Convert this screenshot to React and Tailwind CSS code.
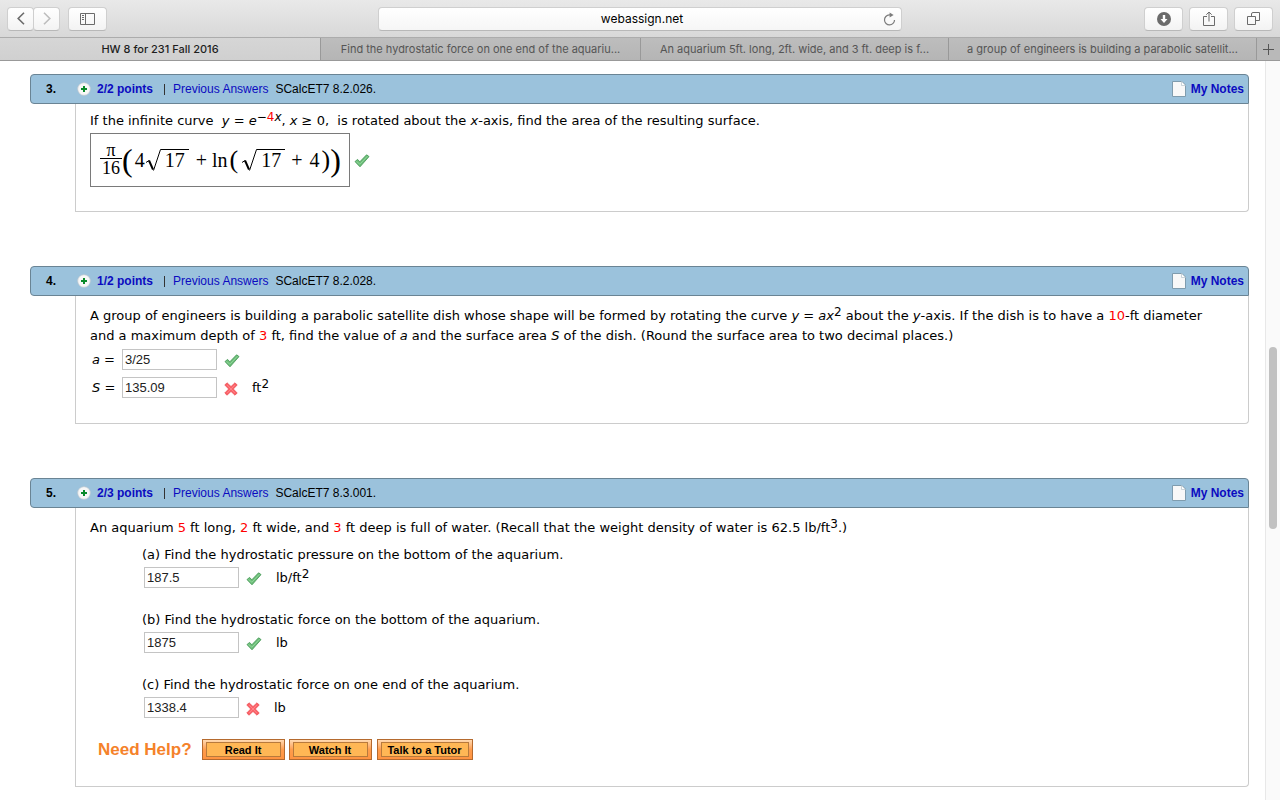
import { useState } from "react";

const tabs = [
  "HW 8 for 231 Fall 2016",
  "Find the hydrostatic force on one end of the aquariu...",
  "An aquarium 5ft. long, 2ft. wide, and 3 ft. deep is f...",
  "a group of engineers is building a parabolic satellit...",
];

const parts = [
  { id: "a", text: "(a) Find the hydrostatic pressure on the bottom of the aquarium.", value: "187.5", correct: true, unit: "lb/ft", power: "2" },
  { id: "b", text: "(b) Find the hydrostatic force on the bottom of the aquarium.", value: "1875", correct: true, unit: "lb" },
  { id: "c", text: "(c) Find the hydrostatic force on one end of the aquarium.", value: "1338.4", correct: false, unit: "lb" },
];

function ToolButton({ label, className, children }) {
  return (
    <button
      aria-label={label}
      className={`flex h-[24px] items-center justify-center rounded border border-[#cfcfcf] border-b-[#b8b8b8] bg-linear-to-b from-white to-[#f3f3f3] text-[#6b6b6b] ${className}`}
    >
      {children}
    </button>
  );
}

function Toolbar() {
  const [url, setUrl] = useState("webassign.net");

  return (
    <div className="flex h-[38px] items-center border-b border-[#acacac] bg-linear-to-b from-[#e9e9e9] to-[#d8d8d8]">
      <div className="flex flex-1 pl-[7px]">
        <ToolButton label="Back" className="w-[27px]">
          <svg width="8" height="13" viewBox="0 0 8 13" fill="none" stroke="currentColor" strokeWidth="1.6">
            <path d="M7 .8 1.2 6.5 7 12.2" />
          </svg>
        </ToolButton>
        <ToolButton label="Forward" className="-ml-px w-[27px]">
          <svg width="8" height="13" viewBox="0 0 8 13" fill="none" stroke="#bdbdbd" strokeWidth="1.6">
            <path d="M1 .8 6.8 6.5 1 12.2" />
          </svg>
        </ToolButton>
        <ToolButton label="Show sidebar" className="ml-2 w-[39px]">
          <svg width="15" height="12" viewBox="0 0 15 12" fill="none" stroke="currentColor">
            <path d="M.5.5h14v11H.5zM5.5.5v11M2 2.5h2M2 4.5h2M2 6.5h2" />
          </svg>
        </ToolButton>
      </div>

      <div className="flex h-[24px] w-[41%] items-center rounded border border-[#cfcfcf] border-b-[#b8b8b8] bg-linear-to-b from-white to-[#f6f6f6] pr-[5px] pl-[22px]">
        <input
          aria-label="Address"
          className="min-w-0 flex-1 bg-transparent text-center text-[12px] text-black outline-none"
          value={url}
          onChange={(e) => setUrl(e.target.value)}
        />
        <button aria-label="Reload">
          <svg width="13" height="14" viewBox="0 0 13 14" fill="none" stroke="#7c7c7c" strokeWidth="1.2">
            <path d="M7.5 2.9H6.3a5 5 0 1 0 5.2 5" />
            <path d="M6.6.4 10.6 3 6.6 5.6z" fill="#7c7c7c" stroke="none" />
          </svg>
        </button>
      </div>

      <div className="flex flex-1 justify-end gap-[6px] pr-[7px]">
        <ToolButton label="Downloads" className="w-[39px]">
          <svg width="14" height="14" viewBox="0 0 14 14">
            <circle cx="7" cy="7" r="7" fill="currentColor" />
            <path d="M5.8 3h2.4v4h2.3L7 11 3.5 7h2.3z" fill="white" />
          </svg>
        </ToolButton>
        <ToolButton label="Share" className="w-[39px]">
          <svg width="12" height="16" viewBox="0 0 12 16" fill="none" stroke="currentColor">
            <path d="M4 5.5H.5v9h11v-9H8M6 10.5V1M3.3 3.7 6 1l2.7 2.7" />
          </svg>
        </ToolButton>
        <ToolButton label="Show all tabs" className="w-[39px]">
          <svg width="13" height="13" viewBox="0 0 13 13" fill="none" stroke="currentColor">
            <path d="M.5 4.5h8v8h-8zM4.5 4.5v-2.5q0-1.5 1.5-1.5h6.5v8h-4" />
          </svg>
        </ToolButton>
      </div>
    </div>
  );
}

function TabBar() {
  const [active, setActive] = useState(0);

  return (
    <div className="grid h-[23px] grid-cols-[321fr_320fr_308fr_308fr_23px] border-b border-[#999] text-[11px] leading-[22px]">
      {tabs.map((tab, i) => (
        <button
          key={tab}
          onClick={() => setActive(i)}
          className={`min-w-0 truncate border-r border-[#999] px-3 ${
            i === active
              ? "bg-linear-to-b from-[#d6d6d6] to-[#d0d0d0] font-medium text-[#1e1e1e]"
              : "bg-linear-to-b from-[#bdbdbd] to-[#b5b5b5] text-[#555]"
          }`}
        >
          {tab}
        </button>
      ))}
      <button aria-label="New tab" className="flex items-center justify-center bg-[#b9b9b9]">
        <svg width="11" height="11" viewBox="0 0 11 11" stroke="#555">
          <path d="M5.5 0v11M0 5.5h11" />
        </svg>
      </button>
    </div>
  );
}

function Mark({ correct }) {
  if (correct) {
    return (
      <svg width="16" height="16" viewBox="0 0 16 16" role="img" aria-label="Correct">
        <path d="M1 9.6 3.6 7.4 5.8 9.8 12.6 2.8 15 4.6 6 14.8z" fill="#6cbc78" stroke="#4a9c5a" strokeWidth=".9" strokeLinejoin="round" />
        <path d="M2.4 9.4 5.9 12.2 13.5 4.2" fill="none" stroke="#8fd699" strokeWidth="1" />
      </svg>
    );
  }
  return (
    <svg width="14" height="16" viewBox="0 0 14 16" role="img" aria-label="Incorrect">
      <path d="M3 2.800 7 6.600 11 2.800 13.200 5 9.300 9l3.900 4L11 15.200 7 11.400 3 15.200.8 13l3.900-4L.8 5z" fill="#fb6167" stroke="#ee5a60" strokeWidth=".9" strokeLinejoin="round" />
      <path d="M3.2 5l7.6 8M10.8 5l-7.6 8" stroke="#ff858a" strokeWidth="1" />
    </svg>
  );
}

function Sup({ children }) {
  return <sup className="static align-[4px] text-[12px] leading-[0]">{children}</sup>;
}

function Red({ children }) {
  return <span className="text-[#f00]">{children}</span>;
}

function Answer({ id, label, initial }) {
  const [value, setValue] = useState(initial);

  return (
    <input
      id={id}
      aria-label={label}
      className="h-[21px] w-[95px] border border-[#c4c4c4] bg-white px-[2px] font-['Liberation_Sans',Arial,sans-serif] text-[13px] text-[#222]"
      value={value}
      onChange={(e) => setValue(e.target.value)}
    />
  );
}

function Question({ number, points, source, children }) {
  return (
    <section>
      <header className="flex h-[30px] items-center rounded-l rounded-tr border border-[#6a8494] bg-[#9bc2dc] pr-1 font-['Liberation_Sans',Arial,sans-serif] text-[12px] text-black">
        <h2 className="w-[46px] pl-[15px] font-bold">{number}.</h2>
        <button aria-label="Expand" className="mr-[6px]">
          <svg width="14" height="14" viewBox="0 0 14 14">
            <circle cx="7" cy="7" r="6.3" fill="#f7f7f7" stroke="#c3cace" strokeWidth=".7" />
            <path d="M7 4v6M4 7h6" stroke="#0a8a2a" strokeWidth="2" />
          </svg>
        </button>
        <a href="#points" className="font-bold text-[#0b0bc0]">{points} points</a>
        <span className="mr-[8px] ml-[11px] h-[11px] w-px bg-[#333]" />
        <a href="#previous" className="text-[#0b0bc0]">Previous Answers</a>
        <span className="ml-[7px] flex-1">{source}</span>
        <a href="#notes" className="flex items-center gap-[5px] font-bold text-[#0b0bc0]">
          <svg width="14" height="16" viewBox="0 0 14 16">
            <path d="M.5.5h9.500l3.500 3.500v11.500H.5z" fill="#f8f8f8" stroke="#7f9cae" />
            <path d="M9.5.5v4h4z" fill="#fff" stroke="#b5c3cc" strokeWidth=".7" />
          </svg>
          My Notes
        </a>
      </header>
      <div className="ml-[45px] rounded-br border border-t-0 border-[#ccc] px-[14px]">{children}</div>
    </section>
  );
}

function Root({ children }) {
  return (
    <span className="flex items-start">
      <svg width="16" height="23" viewBox="0 0 16 23" fill="none" stroke="black">
        <path d="M1 13.500 4 11.500" />
        <path d="M4 11.500 8 20.500" strokeWidth="2" />
        <path d="M8.500 21.500 15.500.5H16" />
      </svg>
      <span className="h-[23px] w-[28px] border-t border-black pl-[4px] leading-[21px]">{children}</span>
    </span>
  );
}

function Formula() {
  return (
    <div className="flex h-[54px] w-[260px] items-center border border-[#7a7a7a] pl-[9px] font-['Liberation_Serif','Times_New_Roman',serif] text-[20px] leading-[22px] text-black">
      <span className="flex w-[22px] flex-col items-center text-[18px] leading-[19px]">
        <span className="leading-[16px]">π</span>
        <span className="w-full border-t border-black text-center">16</span>
      </span>
      <span className="text-[32px] leading-[32px]">(</span>
      <span className="ml-[2px]">4</span>
      <Root>17</Root>
      <span className="ml-[7px]">+</span>
      <span className="ml-[5px]">ln</span>
      <span className="ml-[2px] text-[26px] leading-[28px]">(</span>
      <span className="ml-[3px]"><Root>17</Root></span>
      <span className="ml-[6px]">+</span>
      <span className="ml-[7px]">4</span>
      <span className="ml-[2px] text-[26px] leading-[28px]">)</span>
      <span className="text-[32px] leading-[32px]">)</span>
    </div>
  );
}

function HelpButton({ className, children }) {
  return (
    <button className={`h-[21px] border border-[#b56a2e] bg-linear-to-b from-[#ffd9b0] via-[#ff9d4d] to-[#ff9340] px-[3px] py-[2px] ${className}`}>
      <span className="flex h-full items-center justify-center border border-[#b87a3c] bg-[#ffb755]">{children}</span>
    </button>
  );
}

export default function App() {
  return (
    <div className="flex h-screen flex-col bg-white font-[Inter,sans-serif]">
      <Toolbar />
      <TabBar />

      <div className="flex min-h-0 flex-1">
        <main className="flex min-w-0 flex-1 flex-col gap-[54px] overflow-y-auto pt-[13px] pr-[16px] pl-[30px] font-['DejaVu_Sans',Verdana,sans-serif] text-[13px] leading-[20px] text-black [scrollbar-width:none]">
          <Question number={3} points="2/2" source="SCalcET7 8.2.026.">
            <p className="pt-[7px]">
              If the infinite curve &nbsp;<i>y</i> = <i>e</i>
              <Sup>−<Red>4</Red><i>x</i></Sup>, <i>x</i> ≥ 0, &nbsp;is rotated about the <i>x</i>-axis, find the area of the resulting surface.
            </p>
            <div className="mt-[2px] mb-6 flex items-center gap-[4px]">
              <Formula />
              <Mark correct />
            </div>
          </Question>

          <Question number={4} points="1/2" source="SCalcET7 8.2.028.">
            <p className="pt-[10px]">
              A group of engineers is building a parabolic satellite dish whose shape will be formed by rotating the curve <i>y</i> = <i>ax</i>
              <Sup>2</Sup> about the <i>y</i>-axis. If the dish is to have a <Red>10</Red>-ft diameter
              <br />
              and a maximum depth of <Red>3</Red> ft, find the value of <i>a</i> and the surface area <i>S</i> of the dish. (Round the surface area to two decimal places.)
            </p>
            <div className="mt-[3px] mb-[25px] space-y-[7px]">
              <div className="flex items-center">
                <label htmlFor="q4a" className="w-[32px] pl-[2px] whitespace-nowrap"><i>a</i> =</label>
                <Answer id="q4a" initial="3/25" />
                <span className="ml-[7px]"><Mark correct /></span>
              </div>
              <div className="flex items-center">
                <label htmlFor="q4s" className="w-[32px] pl-[2px] whitespace-nowrap"><i>S</i> =</label>
                <Answer id="q4s" initial="135.09" />
                <span className="ml-[7px]"><Mark correct={false} /></span>
                <span className="ml-[14px]">ft<Sup>2</Sup></span>
              </div>
            </div>
          </Question>

          <Question number={5} points="2/3" source="SCalcET7 8.3.001.">
            <p className="pt-[10px]">
              An aquarium <Red>5</Red> ft long, <Red>2</Red> ft wide, and <Red>3</Red> ft deep is full of water. (Recall that the weight density of water is 62.5 lb/ft<Sup>3</Sup>.)
            </p>
            <div className="mt-[7px] space-y-[22px] pl-[52px]">
              {parts.map((part) => (
                <div key={part.id}>
                  <p>{part.text}</p>
                  <div className="mt-[2px] flex items-center pl-[2px]">
                    <Answer id={`q5${part.id}`} label={part.text} initial={part.value} />
                    <span className="ml-[7px]"><Mark correct={part.correct} /></span>
                    <span className="ml-[14px]">
                      {part.unit}
                      {part.power && <Sup>{part.power}</Sup>}
                    </span>
                  </div>
                </div>
              ))}
            </div>
            <div className="mt-[21px] mb-[26px] flex items-center pl-[8px] font-['Liberation_Sans',Arial,sans-serif] text-[11px] font-bold">
              <span className="mr-[10px] text-[17px] text-[#f5822a]">Need Help?</span>
              <HelpButton className="mr-[4px] w-[83px]">Read It</HelpButton>
              <HelpButton className="mr-[5px] w-[83px]">Watch It</HelpButton>
              <HelpButton className="w-[96px]">Talk to a Tutor</HelpButton>
            </div>
          </Question>
        </main>

        <div className="flex w-[15px] justify-center border-l border-[#e8e8e8] bg-[#fafafa]">
          <div className="mt-[286px] h-[182px] w-[8px] rounded-full bg-[#c1c1c1]" />
        </div>
      </div>
    </div>
  );
}
